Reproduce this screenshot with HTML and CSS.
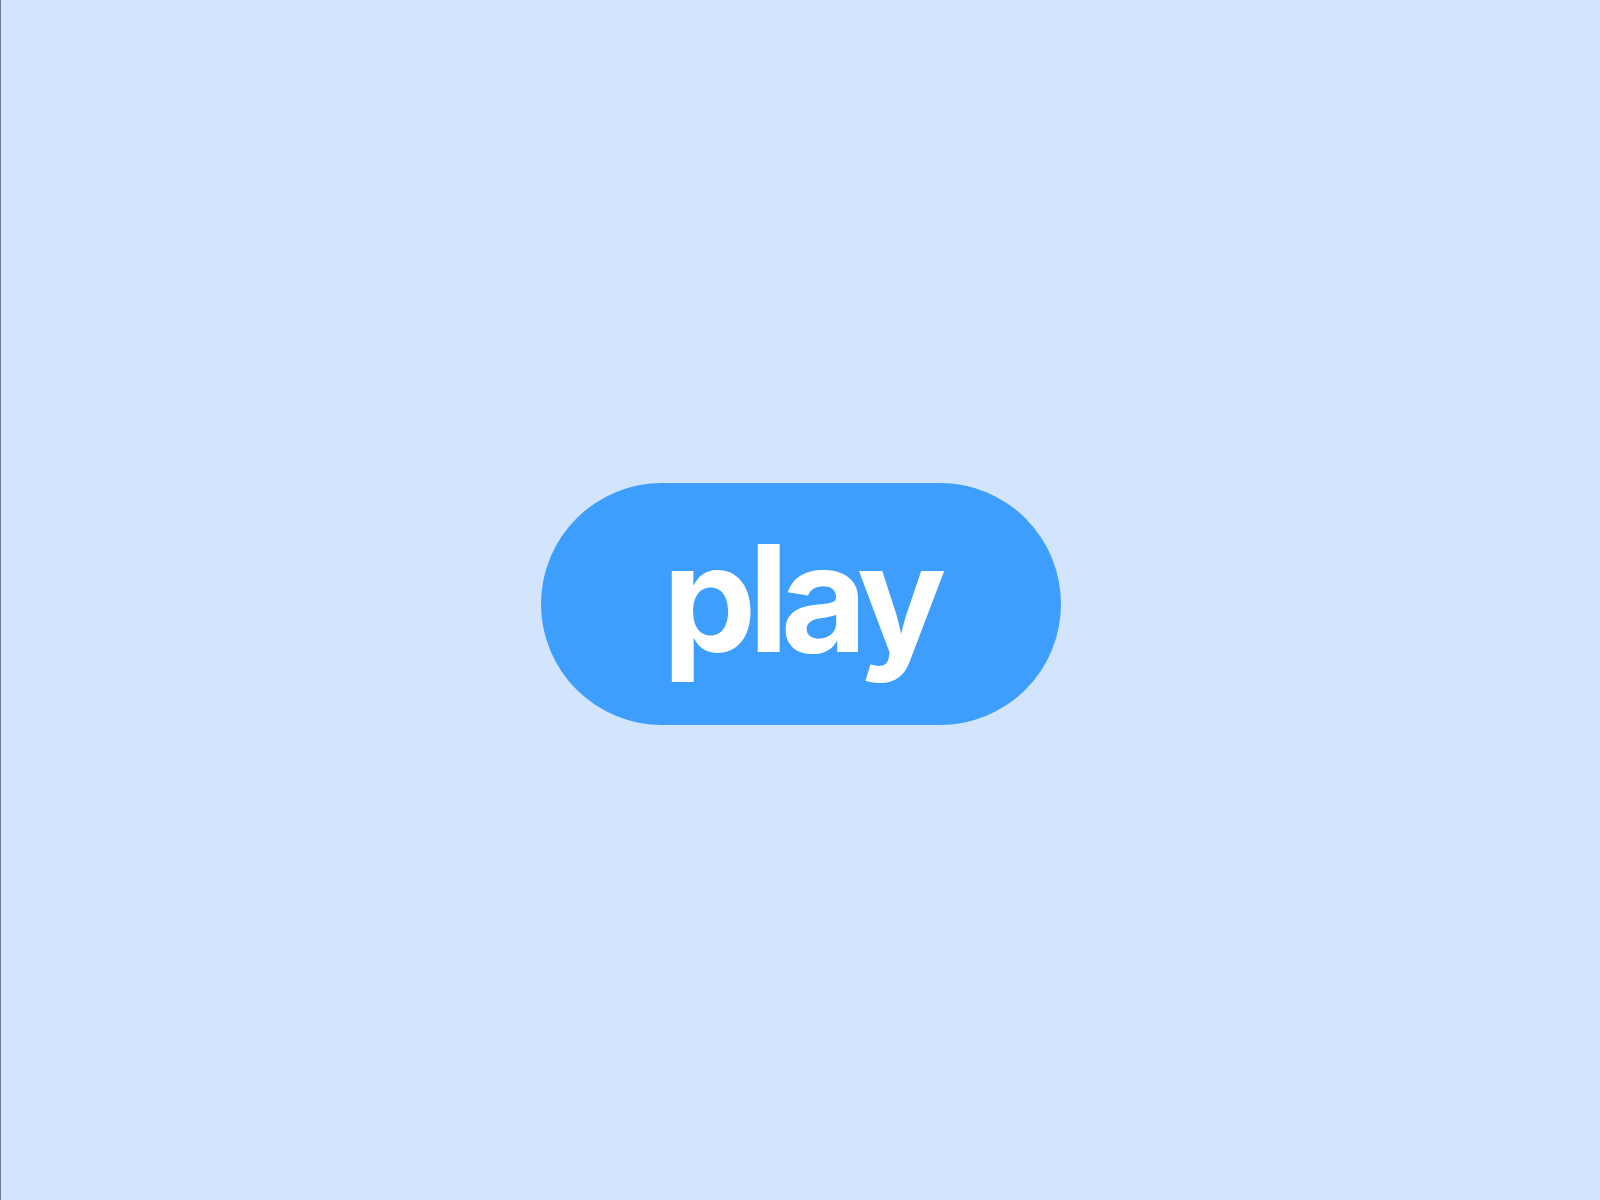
FILE: index.html
```html
<!DOCTYPE html>
<html lang="en">
<head>
    <meta charset="UTF-8">
    <meta name="viewport" content="width=device-width, initial-scale=1.0">
    <title>Play</title>
    <link rel="stylesheet" href="styles.css">
</head>
<body>
    <div class="main">
        <button class="play-btn">play</button>
    </div>
</body>
</html>
```

FILE: styles.css
```css
*{
    margin: 0px;
    padding: 0px;
    box-sizing: border-box;
}
body{
    background-color: #d3e5fd;
}
.main{
    width: 100vw;
    height: 100vh;
    display: flex;
    justify-content: center;
    align-items: center;
    padding-top: 8px;
    background-color: #d3e5fd;
    border-left: 1px solid #6c7593;
}
.play-btn{
    width: 520px;
    height: 242px;
    display: flex;
    justify-content: center;
    align-items: center;
    border: none;
    border-radius: 121px;
    background-color: #3d9efe;
    color: #fff;
    font-family: "Inter", "Noto Sans", sans-serif;
    font-weight: 700;
    font-size: 149px;
    letter-spacing: -8px;
    line-height: 1;
    padding-bottom: 12px;
    cursor: pointer;
}
```
